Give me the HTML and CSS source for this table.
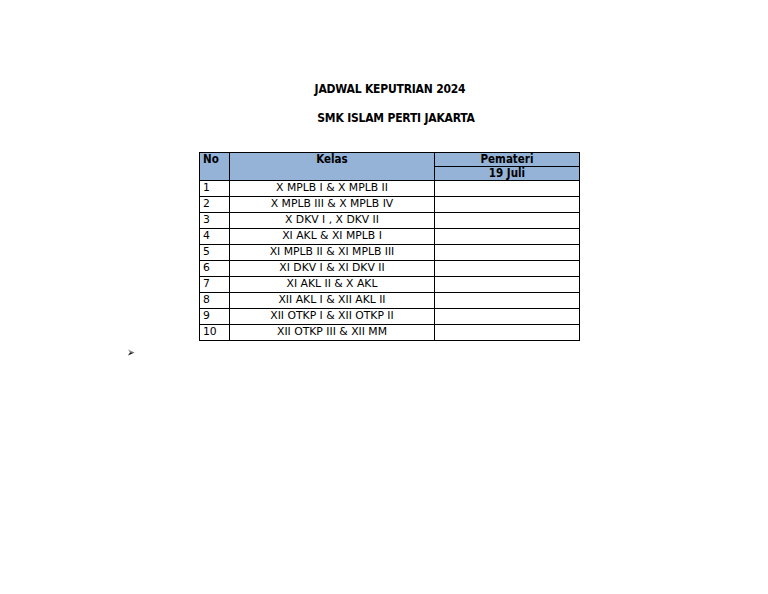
FILE: index.html
```html
<!DOCTYPE html>
<html>
<head>
<meta charset="utf-8">
<link rel="stylesheet" href="styles.css">
</head>
<body>
<div class="page">
  <div class="doc">
    <h1 class="title t1">JADWAL KEPUTRIAN 2024</h1>
    <h2 class="title t2">SMK ISLAM PERTI JAKARTA</h2>
    <table class="sched">
      <colgroup>
        <col class="c-no"><col class="c-kelas"><col class="c-pem">
      </colgroup>
      <thead>
        <tr>
          <th class="h-no" rowspan="2">No</th>
          <th class="h-kelas" rowspan="2">Kelas</th>
          <th class="h-pem">Pemateri</th>
        </tr>
        <tr>
          <th class="h-date">19 Juli</th>
        </tr>
      </thead>
      <tbody>
        <tr><td class="no">1</td><td class="kelas">X MPLB I &amp; X MPLB II</td><td></td></tr>
        <tr><td class="no">2</td><td class="kelas">X MPLB III &amp; X MPLB IV</td><td></td></tr>
        <tr><td class="no">3</td><td class="kelas">X DKV I , X DKV II</td><td></td></tr>
        <tr><td class="no">4</td><td class="kelas">XI AKL &amp; XI MPLB I</td><td></td></tr>
        <tr><td class="no">5</td><td class="kelas">XI MPLB II &amp; XI MPLB III</td><td></td></tr>
        <tr><td class="no">6</td><td class="kelas">XI DKV I &amp; XI DKV II</td><td></td></tr>
        <tr><td class="no">7</td><td class="kelas">XI AKL II &amp; X AKL</td><td></td></tr>
        <tr><td class="no">8</td><td class="kelas">XII AKL I &amp; XII AKL II</td><td></td></tr>
        <tr><td class="no">9</td><td class="kelas">XII OTKP I &amp; XII OTKP II</td><td></td></tr>
        <tr><td class="no">10</td><td class="kelas">XII OTKP III &amp; XII MM</td><td></td></tr>
      </tbody>
    </table>
  </div>
  <div class="bullet">
    <svg class="arrow" width="7" height="7" viewBox="0 0 7 7" aria-label="➢">
      <polygon points="0,0.5 6.5,3.5 2,3.5" fill="#8a8a8a"/>
      <polygon points="2,3.5 6.5,3.5 0,6.5" fill="#111"/>
    </svg>
  </div>
</div>
</body>
</html>
```

FILE: styles.css
```css
html, body {
  margin: 0;
  padding: 0;
  background: #ffffff;
}
body {
  width: 768px;
  height: 594px;
  font-family: "DejaVu Sans Condensed", "DejaVu Sans", sans-serif;
  color: #000;
}
.page {
  padding-top: 82px;
}
.doc {
  width: 380px;
  margin-left: 199px;
}
.title {
  font-size: 12px;
  font-weight: bold;
  margin: 0;
  text-align: center;
  line-height: 14px;
  letter-spacing: -0.2px;
}
.t1 {
  padding-left: 2px;
}
.t2 {
  margin-top: 15px;
  padding-left: 14px;
}
.sched {
  margin-top: 27px;
  border-collapse: collapse;
  table-layout: fixed;
  width: 380px;
  font-size: 11px;
}
.c-no { width: 30px; }
.c-kelas { width: 205px; }
.c-pem { width: 145px; }
.sched th, .sched td {
  border: 1px solid #000;
  padding: 0 3px;
  line-height: 13px;
  vertical-align: top;
}
.sched th {
  background: #95b3d7;
  font-weight: bold;
  font-size: 11.5px;
}
.h-no { text-align: left; height: 27px; }
.h-kelas, .h-pem, .h-date { text-align: center; }
.h-pem { height: 13px; }
.h-date { height: 13px; }
.sched td {
  height: 15px;
  font-family: "DejaVu Sans", sans-serif;
  font-size: 10.8px;
  line-height: 14px;
}
.no { text-align: left; }
.kelas { text-align: center; }
.bullet {
  margin-top: 8px;
  margin-left: 128px;
  height: 7px;
  line-height: 0;
}
.arrow {
  display: block;
}
```
